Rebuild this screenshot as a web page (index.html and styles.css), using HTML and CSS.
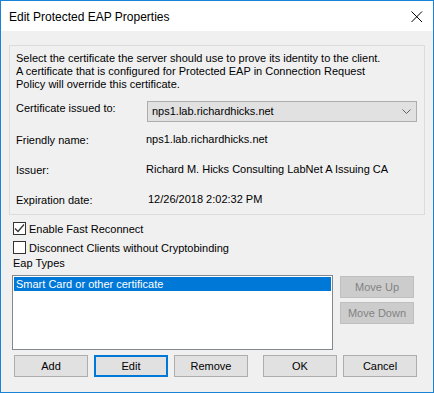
FILE: index.html
```html
<!DOCTYPE html>
<html lang="en">
  <head>
    <meta charset="UTF-8" />
    <title>Edit Protected EAP Properties</title>
    <link rel="stylesheet" href="styles.css">
  </head>
  <body>
    <div class="window">
      <!-- title bar -->
      <div class="titlebar">
        <span class="title">Edit Protected EAP Properties</span>
        <svg class="close" width="12" height="12" viewBox="0 0 12 12">
          <path d="M0.5 0.5 L11 11 M11 0.5 L0.5 11" stroke="#000" stroke-width="1" fill="none" />
        </svg>
      </div>

      <div class="content">
        <!-- certificate group -->
        <div class="group">
          <p class="intro">
            Select the certificate the server should use to prove its identity to the client.<br>
            A certificate that is configured for Protected EAP in Connection Request<br>
            Policy will override this certificate.
          </p>
          <div class="row first">
            <span class="label">Certificate issued to:</span>
            <div class="combo">
              <span>nps1.lab.richardhicks.net</span>
              <svg width="9" height="5" viewBox="0 0 9 5">
                <path d="M0.5 0.5 L4.5 4.5 L8.5 0.5" stroke="#606060" stroke-width="1" fill="none" />
              </svg>
            </div>
          </div>
          <div class="row friendly">
            <span class="label">Friendly name:</span>
            <span class="value">nps1.lab.richardhicks.net</span>
          </div>
          <div class="row">
            <span class="label">Issuer:</span>
            <span class="value">Richard M. Hicks Consulting LabNet A Issuing CA</span>
          </div>
          <div class="row">
            <span class="label">Expiration date:</span>
            <span class="value date">12/26/2018 2:02:32 PM</span>
          </div>
        </div>

        <!-- options -->
        <label class="check first-check">
          <span class="box">
            <svg width="11" height="11" viewBox="0 0 11 11">
              <path d="M1 5.5 L4 8.5 L10 1.5" stroke="#333" stroke-width="1.2" fill="none" />
            </svg>
          </span>
          Enable Fast Reconnect
        </label>
        <label class="check">
          <span class="box"></span>
          Disconnect Clients without Cryptobinding
        </label>

        <div class="eap-label">Eap Types</div>
        <div class="eap-row">
          <div class="listbox">
            <div class="item selected">Smart Card or other certificate</div>
          </div>
          <div class="side-buttons">
            <button class="btn disabled">Move Up</button>
            <button class="btn disabled">Move Down</button>
          </div>
        </div>

        <!-- bottom buttons -->
        <div class="buttons">
          <button class="btn">Add</button>
          <button class="btn default">Edit</button>
          <button class="btn">Remove</button>
          <button class="btn ok">OK</button>
          <button class="btn">Cancel</button>
        </div>
      </div>
    </div>
  </body>
</html>
```

FILE: styles.css
```css
body {
  margin: 0;
  font-family: "Liberation Sans", Arial, sans-serif;
  font-size: 11px;
  color: #000;
}

.window {
  width: 434px;
  height: 393px;
  box-sizing: border-box;
  border: 1px solid #1883d7;
  background-color: #f0f0f0;
  display: flex;
  flex-direction: column;
}

.titlebar {
  height: 30px;
  background-color: #fff;
  display: flex;
  align-items: center;
  justify-content: space-between;
  padding: 0 10px 0 8px;
}
.title {
  font-size: 12px;
  margin-top: 1px;
}
.close {
  margin-top: 1px;
}

.content {
  padding: 14px 8px 0 8px;
  display: flex;
  flex-direction: column;
}

/* certificate group */
.group {
  width: 416px;
  box-sizing: border-box;
  border: 1px solid #dcdcdc;
  padding: 6px 7px 7px 6px;
  white-space: nowrap;
}
.intro {
  margin: 0;
  line-height: 13px;
}
.row {
  display: flex;
  align-items: flex-start;
  line-height: 13px;
  margin-top: 16px;
}
.row.first {
  margin-top: 10px;
  height: 21px;
}
.row.friendly {
  margin-top: 11px;
}
.label {
  width: 130px;
  flex-shrink: 0;
  padding-top: 1px;
}
.value.date {
  padding-left: 2px;
}
.combo {
  flex: 1;
  height: 21px;
  box-sizing: border-box;
  background-color: #e1e1e1;
  border: 1px solid #adadad;
  display: flex;
  align-items: center;
  justify-content: space-between;
  padding: 0 5px 0 4px;
  margin-left: 1px;
}

/* checkboxes */
.check {
  display: flex;
  align-items: center;
  margin-left: 4px;
  margin-top: 6px;
  height: 13px;
  white-space: nowrap;
}
.check.first-check {
  margin-top: 7px;
}
.box {
  width: 13px;
  height: 13px;
  box-sizing: border-box;
  border: 1px solid #333;
  background-color: #fff;
  margin-right: 3px;
  display: flex;
  align-items: center;
  justify-content: center;
}

.eap-label {
  margin: 3px 0 0 4px;
  line-height: 13px;
}
.eap-row {
  display: flex;
  margin-top: 5px;
  margin-left: 3px;
}
.listbox {
  width: 321px;
  height: 75px;
  box-sizing: border-box;
  border: 1px solid #828790;
  background-color: #fff;
  padding: 1px;
}
.item {
  height: 14px;
  line-height: 14px;
  padding-left: 2px;
}
.item.selected {
  background-color: #0078d7;
  color: #fff;
}
.side-buttons {
  display: flex;
  flex-direction: column;
  gap: 4px;
  margin-left: 7px;
  margin-top: 1px;
}

.btn {
  width: 74px;
  height: 22px;
  box-sizing: border-box;
  background-color: #e1e1e1;
  border: 1px solid #adadad;
  font-family: "Liberation Sans", Arial, sans-serif;
  font-size: 11px;
  color: #000;
  padding: 0;
  margin: 0;
}
.btn.disabled {
  background-color: #cccccc;
  border-color: #bfbfbf;
  color: #838383;
}
.btn.default {
  border: 2px solid #0078d7;
}

.buttons {
  display: flex;
  margin-top: 5px;
  margin-left: 5px;
  gap: 6px;
}
.btn.ok {
  margin-left: 9px;
}
```
